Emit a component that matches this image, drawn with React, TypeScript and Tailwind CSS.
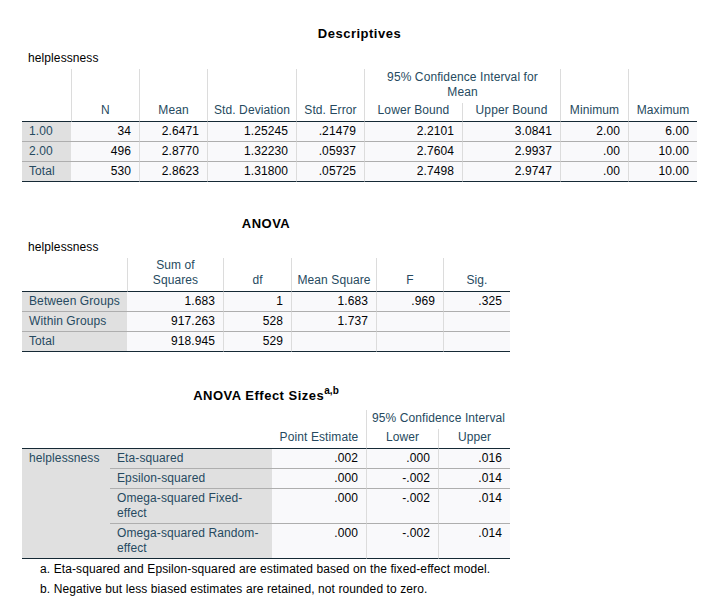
import React from "react";

const dataCell = "text-right pr-[8px] pt-[2px] pb-[2px] align-top text-[#010205] bg-[#f9f9fb] border-l border-[#dcdcdc]";
const rowHead = "text-left pl-[7px] pt-[2px] pb-[2px] align-top bg-[#e0e0e0] text-[#264a60] font-normal";
const colHead = "text-center align-bottom font-normal pb-[3px] text-[#264a60] border-l border-[#dcdcdc]";

const descRows = [
    ["1.00", "34", "2.6471", "1.25245", ".21479", "2.2101", "3.0841", "2.00", "6.00"],
    ["2.00", "496", "2.8770", "1.32230", ".05937", "2.7604", "2.9937", ".00", "10.00"],
    ["Total", "530", "2.8623", "1.31800", ".05725", "2.7498", "2.9747", ".00", "10.00"],
];

const anovaRows = [
    ["Between Groups", "1.683", "1", "1.683", ".969", ".325"],
    ["Within Groups", "917.263", "528", "1.737", "", ""],
    ["Total", "918.945", "529", "", "", ""],
];

// label lines, then point estimate, lower, upper
const effectRows: [string[], string, string, string][] = [
    [["Eta-squared"], ".002", ".000", ".016"],
    [["Epsilon-squared"], ".000", "-.002", ".014"],
    [["Omega-squared Fixed-", "effect"], ".000", "-.002", ".014"],
    [["Omega-squared Random-", "effect"], ".000", "-.002", ".014"],
];

const Title = ({ children, className = "" }: { children: React.ReactNode; className?: string }) => (
    <div className={`text-center font-bold text-[13px] leading-[16px] tracking-[0.5px] text-black ${className}`}>{children}</div>
);

const Label = ({ className = "" }: { className?: string }) => (
    <div className={`pl-[6px] h-[14px] leading-[14px] text-black ${className}`}>helplessness</div>
);

function Descriptives() {
    const widths = [49, 68, 68, 89, 68, 98, 98, 68, 69];
    return (
        <div className="w-[675px]">
            <Title>Descriptives</Title>
            <Label className="mt-[9px] mb-[4px]" />
            <table className="table-fixed border-separate border-spacing-0 w-[675px] leading-[15px]">
                <colgroup>
                    {widths.map((w, i) => (
                        <col key={i} style={{ width: w }} />
                    ))}
                </colgroup>
                <thead>
                    <tr className="h-[34px]">
                        <th rowSpan={2} className="border-b border-[#152935]"></th>
                        <th rowSpan={2} className={`${colHead} border-b border-b-[#152935]`}>N</th>
                        <th rowSpan={2} className={`${colHead} border-b border-b-[#152935]`}>Mean</th>
                        <th rowSpan={2} className={`${colHead} border-b border-b-[#152935]`}>Std. Deviation</th>
                        <th rowSpan={2} className={`${colHead} border-b border-b-[#152935]`}>Std. Error</th>
                        <th colSpan={2} className={`${colHead} pt-[1px] pb-[2px] px-[10px]`}>
                            95% Confidence Interval for Mean
                        </th>
                        <th rowSpan={2} className={`${colHead} border-b border-b-[#152935]`}>Minimum</th>
                        <th rowSpan={2} className={`${colHead} border-b border-b-[#152935]`}>Maximum</th>
                    </tr>
                    <tr className="h-[19px]">
                        <th className={`${colHead} border-b border-b-[#152935]`}>Lower Bound</th>
                        <th className={`${colHead} border-b border-b-[#152935]`}>Upper Bound</th>
                    </tr>
                </thead>
                <tbody>
                    {descRows.map((r, ri) => {
                        const bb = ri === descRows.length - 1 ? "border-b border-b-[#152935]" : "border-b border-b-[#aeaeae]";
                        return (
                            <tr key={ri}>
                                <th className={`${rowHead} ${bb}`}>{r[0]}</th>
                                {r.slice(1).map((v, ci) => (
                                    <td key={ci} className={`${dataCell} ${bb} ${ci === 0 ? "border-l-0" : ""}`}>
                                        {v}
                                    </td>
                                ))}
                            </tr>
                        );
                    })}
                </tbody>
            </table>
        </div>
    );
}

function Anova() {
    const widths = [105, 96, 68, 85, 67, 67];
    const heads = ["Sum of Squares", "df", "Mean Square", "F", "Sig."];
    return (
        <div className="w-[488px] mt-[34px]">
            <Title>ANOVA</Title>
            <Label className="mt-[8px] mb-[4px]" />
            <table className="table-fixed border-separate border-spacing-0 w-[488px] leading-[15px]">
                <colgroup>
                    {widths.map((w, i) => (
                        <col key={i} style={{ width: w }} />
                    ))}
                </colgroup>
                <thead>
                    <tr className="h-[34px]">
                        <th className="border-b border-[#152935]"></th>
                        {heads.map((h, i) => (
                            <th key={i} className={`${colHead} border-b border-b-[#152935] ${i === 0 ? "px-[18px]" : ""}`}>
                                {h}
                            </th>
                        ))}
                    </tr>
                </thead>
                <tbody>
                    {anovaRows.map((r, ri) => {
                        const bb = ri === anovaRows.length - 1 ? "border-b border-b-[#152935]" : "border-b border-b-[#aeaeae]";
                        return (
                            <tr key={ri}>
                                <th className={`${rowHead} ${bb} whitespace-nowrap`}>{r[0]}</th>
                                {r.slice(1).map((v, ci) => (
                                    <td key={ci} className={`${dataCell} ${bb} ${ci === 0 ? "border-l-0" : ""}`}>
                                        {v}
                                    </td>
                                ))}
                            </tr>
                        );
                    })}
                </tbody>
            </table>
        </div>
    );
}

function EffectSizes() {
    const widths = [88, 162, 94, 72, 72];
    return (
        <div className="w-[488px] mt-[36px]">
            <Title>
                ANOVA Effect Sizes
                <span className="text-[10px] relative -top-[6px] tracking-normal">a,b</span>
            </Title>
            <table className="mt-[5px] table-fixed border-separate border-spacing-0 w-[488px] leading-[15px]">
                <colgroup>
                    {widths.map((w, i) => (
                        <col key={i} style={{ width: w }} />
                    ))}
                </colgroup>
                <thead>
                    <tr className="h-[19px]">
                        <th colSpan={2} rowSpan={2} className="border-b border-b-[#152935]"></th>
                        <th rowSpan={2} className="text-center align-bottom font-normal pb-[3px] text-[#264a60] border-b border-b-[#152935] whitespace-nowrap">
                            Point Estimate
                        </th>
                        <th colSpan={2} className={`${colHead} pb-[2px]`}>95% Confidence Interval</th>
                    </tr>
                    <tr className="h-[20px]">
                        <th className={`${colHead} border-b border-b-[#152935]`}>Lower</th>
                        <th className={`${colHead} border-b border-b-[#152935]`}>Upper</th>
                    </tr>
                </thead>
                <tbody>
                    {effectRows.map(([lines, pe, lo, up], ri) => {
                        const last = ri === effectRows.length - 1;
                        const pb = lines.length > 1 ? "pb-[1px]" : "";
                        const bb = last ? "border-b border-b-[#152935]" : "border-b border-b-[#aeaeae]";
                        return (
                            <tr key={ri}>
                                {ri === 0 && (
                                    <th rowSpan={4} className={`${rowHead} pl-[6px] border-b border-b-[#152935]`}>
                                        helplessness
                                    </th>
                                )}
                                <th className={`${rowHead} ${bb} ${pb} whitespace-nowrap`}>
                                    {lines.map((l, li) => (
                                        <div key={li}>{l}</div>
                                    ))}
                                </th>
                                {[pe, lo, up].map((v, ci) => (
                                    <td key={ci} className={`${dataCell} ${bb} ${pb} ${ci === 0 ? "border-l-0" : ""}`}>
                                        {v}
                                    </td>
                                ))}
                            </tr>
                        );
                    })}
                </tbody>
            </table>
            <div className="pl-[18px] leading-[20px] text-black">
                <div>a. Eta-squared and Epsilon-squared are estimated based on the fixed-effect model.</div>
                <div>b. Negative but less biased estimates are retained, not rounded to zero.</div>
            </div>
        </div>
    );
}

export default function App() {
    return (
        <div
            className="w-[707px] h-[608px] bg-white pl-[22px] pt-[26px] text-[12px] tracking-[0.1px] overflow-hidden"
            style={{ fontFamily: '"Liberation Sans", Arial, sans-serif' }}
        >
            <Descriptives />
            <Anova />
            <EffectSizes />
        </div>
    );
}
